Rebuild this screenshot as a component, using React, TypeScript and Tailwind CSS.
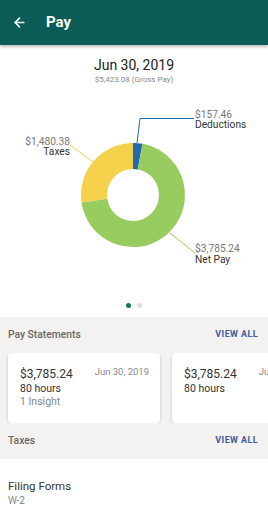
import { ArrowLeft } from "lucide-react";

const cx = 133;
const cy = 195;
const R = 52;
const r = 26;

const slices = [
  { value: 157.46, color: "#2468ad" },
  { value: 3785.24, color: "#98cc5f" },
  { value: 1480.38, color: "#f5d04b" },
];

function pt(rad: number, deg: number) {
  const a = (deg * Math.PI) / 180;
  return [cx + rad * Math.sin(a), cy - rad * Math.cos(a)];
}

function arc(start: number, end: number) {
  const large = end - start > 180 ? 1 : 0;
  const [x1, y1] = pt(R, start);
  const [x2, y2] = pt(R, end);
  const [x3, y3] = pt(r, end);
  const [x4, y4] = pt(r, start);
  return `M${x1} ${y1} A${R} ${R} 0 ${large} 1 ${x2} ${y2} L${x3} ${y3} A${r} ${r} 0 ${large} 0 ${x4} ${y4} Z`;
}

function Donut() {
  const total = slices.reduce((s, x) => s + x.value, 0);
  let acc = 0;
  return (
    <svg width="268" height="210" viewBox="0 90 268 210" className="block">
      {slices.map((s) => {
        const start = (acc / total) * 360;
        acc += s.value;
        const end = (acc / total) * 360;
        return <path key={s.color} d={arc(start, end)} fill={s.color} />;
      })}
      <polyline points="137,143 140,118.5 194,118.5" fill="none" stroke="#2468ad" strokeWidth="1" />
      <line x1="70" y1="145" x2="93" y2="162" stroke="#f5d04b" strokeWidth="1" />
      <line x1="170" y1="233" x2="195" y2="253" stroke="#98cc5f" strokeWidth="1" />
      <g fontFamily="Roboto, sans-serif" fontSize="10.2">
        <text x="195" y="117.5" fill="#777">$157.46</text>
        <text x="195" y="127.5" fill="#333">Deductions</text>
        <text x="70" y="144.5" fill="#777" textAnchor="end">$1,480.38</text>
        <text x="70" y="154.5" fill="#333" textAnchor="end">Taxes</text>
        <text x="195" y="251.5" fill="#777">$3,785.24</text>
        <text x="195" y="263" fill="#333">Net Pay</text>
      </g>
    </svg>
  );
}

function StatementCard({ date, insight }: { date: string; insight?: string }) {
  return (
    <div className="w-[152px] h-[70px] shrink-0 bg-white rounded-[3px] shadow-[0_1px_3px_rgba(0,0,0,0.2)] pl-3 pr-[11px] pt-[13px]">
      <div className="flex justify-between items-start">
        <span className="text-[12px] leading-[16px] text-[#333]">$3,785.24</span>
        <span className="text-[9.5px] leading-[12px] text-[#888] whitespace-nowrap">{date}</span>
      </div>
      <div className="text-[10.5px] leading-[13px] text-[#333]">80 hours</div>
      {insight && <div className="text-[10.5px] leading-[13px] text-[#888]">{insight}</div>}
    </div>
  );
}

export default function App() {
  return (
    <div className="w-[268px] h-[527px] overflow-hidden bg-white font-['Roboto',sans-serif]">
      <header className="relative z-10 h-[45px] bg-[#0b5c54] flex items-center shadow-[0_2px_3px_rgba(0,0,0,0.25)]">
        <ArrowLeft className="w-[15px] h-[15px] text-white ml-[12px]" strokeWidth={2.5} />
        <span className="ml-[19px] text-white font-bold text-[15px]">Pay</span>
      </header>

      <section className="flex flex-col items-center">
        <div className="h-[45px] flex flex-col items-center pt-[10px]">
          <div className="text-[14px] leading-[20px] text-[#222]">Jun 30, 2019</div>
          <div className="text-[8px] leading-[10px] text-[#888]">$5,423.08 (Gross Pay)</div>
        </div>
        <Donut />
        <div className="h-[17px] flex gap-[6px] pt-[3px]">
          <span className="w-[5px] h-[5px] rounded-full bg-[#0b7a5e]" />
          <span className="w-[5px] h-[5px] rounded-full bg-[#ddd]" />
        </div>
      </section>

      <section className="bg-[#f3f2f1] h-[142px]">
        <div className="flex justify-between items-center h-[36px] px-[8px]">
          <span className="text-[10.3px] font-medium text-[#666]">Pay Statements</span>
          <span className="text-[9px] font-bold tracking-[0.4px] text-[#3d5ca3] mr-[2px]">VIEW ALL</span>
        </div>
        <div className="flex gap-[12px] pl-[8px] overflow-hidden">
          <StatementCard date="Jun 30, 2019" insight="1 Insight" />
          <StatementCard date="Jun 30, 2019" />
        </div>
        <div className="flex justify-between items-center h-[36px] px-[8px]">
          <span className="text-[10.3px] font-medium text-[#666]">Taxes</span>
          <span className="text-[9px] font-bold tracking-[0.4px] text-[#3d5ca3] mr-[2px]">VIEW ALL</span>
        </div>
      </section>

      <section className="px-[8px] pt-[20px]">
        <div className="text-[11.5px] leading-[15px] text-[#333]">Filing Forms</div>
        <div className="text-[10px] leading-[14px] text-[#888]">W-2</div>
      </section>
    </div>
  );
}
